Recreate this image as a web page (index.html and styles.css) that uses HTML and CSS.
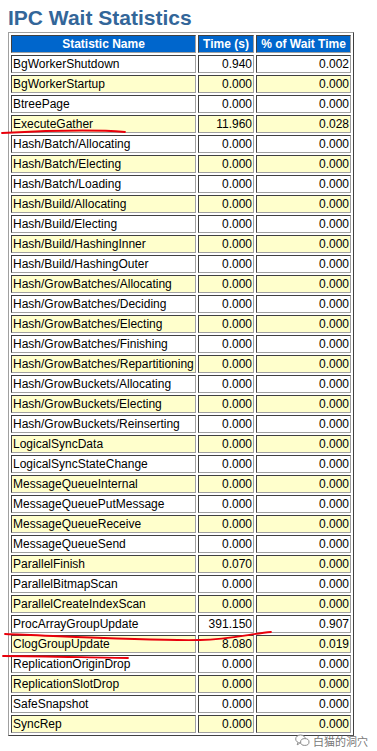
FILE: index.html
```html
<!DOCTYPE html>
<html>
<head>
<meta charset="utf-8">
<link rel="stylesheet" href="styles.css">
</head>
<body>
<h1 class="title">IPC Wait Statistics</h1>
<table class="stats">
<thead>
<tr><th class="c-name">Statistic Name</th><th class="c-time">Time (s)</th><th class="c-pct">% of Wait Time</th></tr>
</thead>
<tbody>
<tr class="w"><td>BgWorkerShutdown</td><td class="n">0.940</td><td class="n">0.002</td></tr>
<tr class="y"><td>BgWorkerStartup</td><td class="n">0.000</td><td class="n">0.000</td></tr>
<tr class="w"><td>BtreePage</td><td class="n">0.000</td><td class="n">0.000</td></tr>
<tr class="y"><td>ExecuteGather</td><td class="n">11.960</td><td class="n">0.028</td></tr>
<tr class="w"><td>Hash/Batch/Allocating</td><td class="n">0.000</td><td class="n">0.000</td></tr>
<tr class="y"><td>Hash/Batch/Electing</td><td class="n">0.000</td><td class="n">0.000</td></tr>
<tr class="w"><td>Hash/Batch/Loading</td><td class="n">0.000</td><td class="n">0.000</td></tr>
<tr class="y"><td>Hash/Build/Allocating</td><td class="n">0.000</td><td class="n">0.000</td></tr>
<tr class="w"><td>Hash/Build/Electing</td><td class="n">0.000</td><td class="n">0.000</td></tr>
<tr class="y"><td>Hash/Build/HashingInner</td><td class="n">0.000</td><td class="n">0.000</td></tr>
<tr class="w"><td>Hash/Build/HashingOuter</td><td class="n">0.000</td><td class="n">0.000</td></tr>
<tr class="y"><td>Hash/GrowBatches/Allocating</td><td class="n">0.000</td><td class="n">0.000</td></tr>
<tr class="w"><td>Hash/GrowBatches/Deciding</td><td class="n">0.000</td><td class="n">0.000</td></tr>
<tr class="y"><td>Hash/GrowBatches/Electing</td><td class="n">0.000</td><td class="n">0.000</td></tr>
<tr class="w"><td>Hash/GrowBatches/Finishing</td><td class="n">0.000</td><td class="n">0.000</td></tr>
<tr class="y"><td>Hash/GrowBatches/Repartitioning</td><td class="n">0.000</td><td class="n">0.000</td></tr>
<tr class="w"><td>Hash/GrowBuckets/Allocating</td><td class="n">0.000</td><td class="n">0.000</td></tr>
<tr class="y"><td>Hash/GrowBuckets/Electing</td><td class="n">0.000</td><td class="n">0.000</td></tr>
<tr class="w"><td>Hash/GrowBuckets/Reinserting</td><td class="n">0.000</td><td class="n">0.000</td></tr>
<tr class="y"><td>LogicalSyncData</td><td class="n">0.000</td><td class="n">0.000</td></tr>
<tr class="w"><td>LogicalSyncStateChange</td><td class="n">0.000</td><td class="n">0.000</td></tr>
<tr class="y"><td>MessageQueueInternal</td><td class="n">0.000</td><td class="n">0.000</td></tr>
<tr class="w"><td>MessageQueuePutMessage</td><td class="n">0.000</td><td class="n">0.000</td></tr>
<tr class="y"><td>MessageQueueReceive</td><td class="n">0.000</td><td class="n">0.000</td></tr>
<tr class="w"><td>MessageQueueSend</td><td class="n">0.000</td><td class="n">0.000</td></tr>
<tr class="y"><td>ParallelFinish</td><td class="n">0.070</td><td class="n">0.000</td></tr>
<tr class="w"><td>ParallelBitmapScan</td><td class="n">0.000</td><td class="n">0.000</td></tr>
<tr class="y"><td>ParallelCreateIndexScan</td><td class="n">0.000</td><td class="n">0.000</td></tr>
<tr class="w"><td>ProcArrayGroupUpdate</td><td class="n">391.150</td><td class="n">0.907</td></tr>
<tr class="y"><td>ClogGroupUpdate</td><td class="n">8.080</td><td class="n">0.019</td></tr>
<tr class="w"><td>ReplicationOriginDrop</td><td class="n">0.000</td><td class="n">0.000</td></tr>
<tr class="y"><td>ReplicationSlotDrop</td><td class="n">0.000</td><td class="n">0.000</td></tr>
<tr class="w"><td>SafeSnapshot</td><td class="n">0.000</td><td class="n">0.000</td></tr>
<tr class="y"><td>SyncRep</td><td class="n">0.000</td><td class="n">0.000</td></tr>
</tbody>
</table>

<svg class="marks" width="377" height="751" viewBox="0 0 377 751">
  <path d="M2 133 C 40 131, 90 129, 125 132" />
  <path d="M5 634 C 60 636, 150 641, 200 640 C 230 639, 250 634, 271 632" />
  <path d="M3 656 C 50 656, 100 658, 128 658" />
</svg>

<div class="watermark">
  <svg class="wm-icon" width="15" height="13" viewBox="0 0 15 13">
    <ellipse cx="5.5" cy="5" rx="4.8" ry="4" />
    <ellipse cx="9.8" cy="8" rx="4.2" ry="3.4" />
    <path d="M3 8.5 L2.2 10.8 L4.6 9.4" />
  </svg>
  <span class="wm-text">白猫的洞穴</span>
</div>
</body>
</html>
```

FILE: styles.css
```css
html, body {
  margin: 0;
  padding: 0;
  background: #ffffff;
}

body {
  padding: 6px 8px 0 8px;
  font-family: "Liberation Sans", Arial, sans-serif;
  position: relative;
  width: 377px;
  height: 751px;
  box-sizing: border-box;
  overflow: hidden;
}

.title {
  margin: 0 0 2px 0;
  font-size: 21px;
  line-height: 24px;
  font-weight: bold;
  color: #336699;
}

.stats {
  border-collapse: separate;
  border-spacing: 2px;
  border: 1px solid;
  border-color: #a0a0a0 #404040 #404040 #a0a0a0;
  table-layout: fixed;
  width: 346px;
  font-size: 12px;
  color: #000000;
}

.stats th,
.stats td {
  box-sizing: border-box;
  height: 18px;
  line-height: 15px;
  padding: 1px 1px 0 1px;
  border: 1px solid;
  border-color: #404040 #a0a0a0 #a0a0a0 #404040;
  white-space: nowrap;
  overflow: hidden;
}

.stats th {
  background: #0066cc;
  color: #ffffff;
  font-weight: bold;
  text-align: center;
}

.c-name { width: 185px; }
.c-time { width: 56px; }
.c-pct { width: 95px; }

.stats td { text-align: left; }
.stats td.n { text-align: right; }

.stats tr.w td { background: #ffffff; }
.stats tr.y td { background: #ffffcc; }

.marks {
  position: absolute;
  left: 0;
  top: 0;
  pointer-events: none;
}

.marks path {
  fill: none;
  stroke: #e8000b;
  stroke-width: 1.8;
  stroke-linecap: round;
}

.watermark {
  position: absolute;
  left: 295px;
  top: 734px;
  display: flex;
  align-items: center;
  gap: 3px;
}

.wm-icon ellipse,
.wm-icon path {
  fill: #ffffff;
  stroke: #8a8a8a;
  stroke-width: 1;
}

.wm-text {
  font-family: "Noto Sans CJK SC", sans-serif;
  font-size: 11px;
  line-height: 12px;
  color: #777777;
  text-shadow: 0 0 1px #ffffff;
}
```
